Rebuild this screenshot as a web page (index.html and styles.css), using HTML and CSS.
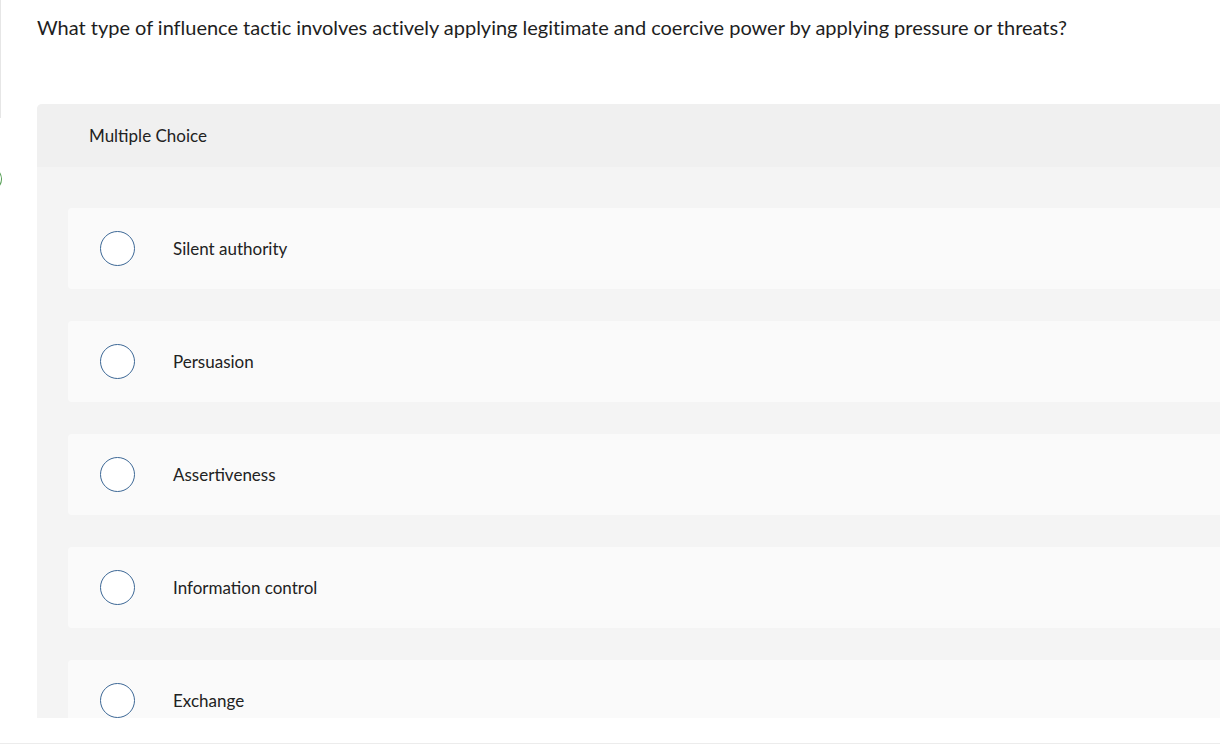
FILE: index.html
```html
<!DOCTYPE html>
<html lang="en">
<head>
<meta charset="utf-8">
<title>Multiple Choice</title>
<link rel="stylesheet" href="styles.css">
</head>
<body>
<div class="edge-line"></div>
<div class="edge-ring"></div>
<div class="page">
  <h1 class="question">What type of influence tactic involves actively applying legitimate and coercive power by applying pressure or threats?</h1>
  <section class="panel">
    <div class="panel-head">Multiple Choice</div>
    <div class="panel-body">
      <label class="option"><span class="radio"></span><span class="label">Silent authority</span></label>
      <label class="option"><span class="radio"></span><span class="label">Persuasion</span></label>
      <label class="option"><span class="radio"></span><span class="label">Assertiveness</span></label>
      <label class="option"><span class="radio"></span><span class="label">Information control</span></label>
      <label class="option"><span class="radio"></span><span class="label">Exchange</span></label>
    </div>
  </section>
  <div class="footer-line"></div>
</div>
</body>
</html>
```
FILE: styles.css
```css
html, body {
  margin: 0;
  padding: 0;
  background: #ffffff;
  overflow: hidden;
}
body {
  width: 1220px;
  height: 751px;
  position: relative;
  font-family: "Lato", "Liberation Sans", sans-serif;
  color: #222222;
}
.edge-line {
  position: absolute;
  left: 0;
  top: 0;
  width: 1px;
  height: 118px;
  background: #e6e6e6;
}
.edge-ring {
  position: absolute;
  left: -30px;
  top: 165px;
  width: 32px;
  height: 28px;
  box-sizing: border-box;
  border: 1.5px solid #4c9a4c;
  border-radius: 50%;
}
.page {
  padding-left: 37px;
}
.question {
  margin: 0;
  padding-top: 15px;
  height: 104px;
  box-sizing: border-box;
  font-size: 20px;
  font-weight: 400;
  line-height: 24px;
  letter-spacing: -0.02px;
  color: #1e1e1e;
  white-space: nowrap;
}
.panel {
  height: 614px;
  overflow: hidden;
  background: #f4f4f4;
  border-top-left-radius: 5px;
}
.panel-head {
  height: 63px;
  background: #f0f0f0;
  padding-left: 52px;
  display: flex;
  align-items: center;
  font-size: 17px;
  color: #222;
}
.panel-body {
  padding: 41px 0 0 31px;
  display: flex;
  flex-direction: column;
  gap: 32px;
}
.option {
  flex: none;
  height: 81px;
  background: #fafafa;
  border-top-left-radius: 4px;
  border-bottom-left-radius: 4px;
  display: flex;
  align-items: center;
  padding-left: 32px;
  font-size: 17px;
  color: #222;
}
.radio {
  flex: none;
  width: 35px;
  height: 35px;
  box-sizing: border-box;
  border: 1.5px solid #3d6896;
  border-radius: 50%;
  background: #ffffff;
  margin-right: 38px;
}
.footer-line {
  margin-left: -37px;
  margin-top: 25px;
  height: 1px;
  background: #ececec;
}
```
